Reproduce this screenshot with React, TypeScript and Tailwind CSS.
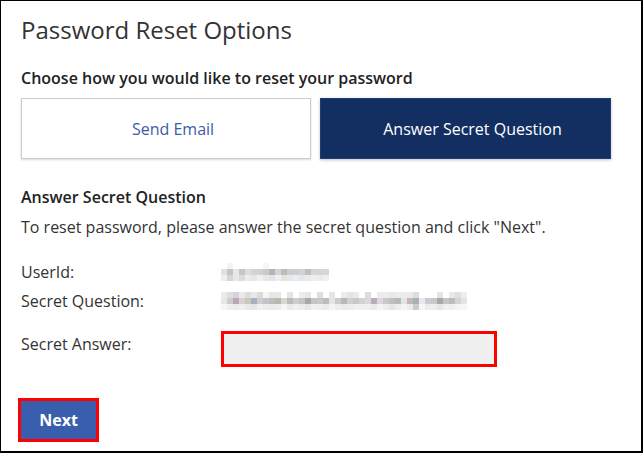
import React from 'react';

// Pixelated placeholder for the redacted values
const userIdPixels = [
  ['#ffffff', '#f4f4f4', '#ffffff', '#ffffff', '#ffffff', '#ffffff', '#ffffff', '#f6f6f6', '#ffffff', '#ffffff', '#ffffff', '#ffffff', '#ffffff', '#ffffff', '#ffffff', '#ffffff', '#ffffff', '#ffffff'],
  ['#e2e2e2', '#c4c4c4', '#e6e6e6', '#c8c3c7', '#dedcdf', '#d2d4d8', '#d3cfcc', '#cfcac8', '#b2b5bd', '#d4d4d4', '#c1bbb5', '#c9cdd4', '#d0ccc7', '#ccd4d6', '#bdbfc2', '#d8d4d0', '#cfd6da', '#d6d6d6'],
  ['#eeeeee', '#d6d6d9', '#e7e7e7', '#dcdcdc', '#ececec', '#e6e6e6', '#f0f0f0', '#e9e6e6', '#e2e4ea', '#efefef', '#e5e3de', '#e4e8ee', '#ececec', '#e0e8ec', '#ebebeb', '#eeeeee', '#e8ecf0', '#f0f0f0'],
];

const questionPixels = [
  ['#eeeaea', '#dedede', '#d9d3d9', '#eaeaea', '#dcdcdc', '#e8e8e8', '#dadada', '#f5f5f5', '#e6e6e6', '#e8e8e8', '#ffffff', '#e4e4e4', '#ffffff', '#ececec', '#e6e6e6', '#ffffff', '#dedede', '#ffffff', '#e6e6e6', '#ffffff', '#ececec', '#e4e4e4', '#eaeaea', '#ffffff', '#dcdcdc', '#ffffff', '#ececec', '#ececec', '#e8e8e8', '#ececec', '#ececec', '#eaeaea', '#dcdcdc', '#ffffff', '#ffffff', '#ffffff', '#e4e4e4', '#ffffff', '#e8e8e8', '#dfdfdf', '#ededed'],
  ['#e6e6e6', '#cccccc', '#b6a8b6', '#d4d2d2', '#ccc6c0', '#a8b0bc', '#d2cdd2', '#c4c4c8', '#bebebe', '#b8b8b0', '#d8d8d0', '#bcbcbc', '#cccccc', '#c4c4c4', '#a8a8a8', '#c4c4c4', '#c8c8c8', '#bcbcbc', '#e4e4e4', '#cccccc', '#b8b8b8', '#d0d0d0', '#c8c8cc', '#d8d0cc', '#d8d8e4', '#b8acb8', '#dcd8dc', '#c8c8c8', '#bcc0c4', '#b8b8b8', '#e4e4e4', '#c4b8b8', '#a8b0bc', '#eee8e4', '#c8ccd4', '#c8c8c8', '#a8a8a8', '#c8c4c4', '#bcbcbc', '#d4d4d4', '#e4e4e4'],
  ['#f6f6f6', '#eeeeee', '#ececec', '#f0f0f0', '#eaeaea', '#e6e6ea', '#f0f0f0', '#ececec', '#eaeaea', '#ececec', '#f6f6f6', '#eaeaea', '#f0f0f0', '#ececec', '#e6e6e6', '#f0f0f0', '#eeeeee', '#eaeaea', '#f4f4f4', '#eeeeee', '#eaeaea', '#ececec', '#f0f0f0', '#f4eeec', '#eeeef4', '#eaeaea', '#f4f4f4', '#eeeeee', '#e4e6e8', '#eeeeee', '#f4f4f4', '#ececec', '#cccccc', '#f6f6f6', '#eaecef', '#eeeeee', '#e6e6e6', '#f0f0f0', '#eeeeee', '#f4f4f4', '#f6f6f6'],
];

const PixelBlur = ({ rows, size }: { rows: string[][]; size: number }) => (
  <div className="flex flex-col">
    {rows.map((row, i) => (
      <div key={i} className="flex">
        {row.map((c, j) => (
          <div key={j} style={{ backgroundColor: c, width: size, height: size }} />
        ))}
      </div>
    ))}
  </div>
);

const App = () => {
  return (
    <div
      className="w-[643px] h-[453px] bg-white border-l border-t border-r-2 border-b-2 border-black px-5 text-[#333333]"
      style={{ fontFamily: '"Open Sans", "Liberation Sans", sans-serif' }}
    >
      {/* Título */}
      <h1 className="pt-[13px] text-[24px] leading-[32px] font-normal text-[#333333]">
        Password Reset Options
      </h1>

      <p className="mt-[22px] text-[16px] leading-[20px] font-semibold text-[#222222]">
        Choose how you would like to reset your password
      </p>

      {/* Opciones */}
      <div className="mt-[10px] flex gap-[9px]">
        <button className="w-[290px] h-[61px] pl-[14px] bg-white border border-[#cccccc] shadow-[0_1px_2px_rgba(0,0,0,0.15)] text-[16px] text-[#3a5cab]">
          Send Email
        </button>
        <button className="w-[291px] h-[61px] pl-[14px] bg-[#132f61] border border-[#1c3d75] shadow-[0_1px_3px_rgba(0,0,0,0.25)] text-[16px] text-white">
          Answer Secret Question
        </button>
      </div>

      {/* Pregunta secreta */}
      <h2 className="mt-[28px] text-[16px] leading-[20px] font-semibold text-[#222222]">
        Answer Secret Question
      </h2>
      <p className="mt-[10px] text-[16px] leading-[20px] text-[#333333]">
        To reset password, please answer the secret question and click "Next".
      </p>

      <div className="mt-[24px] flex items-center h-[22px]">
        <span className="w-[200px] text-[16px] leading-[20px]">UserId:</span>
        <PixelBlur rows={userIdPixels} size={6} />
      </div>
      <div className="mt-[7px] flex items-center h-[22px]">
        <span className="w-[200px] text-[16px] leading-[20px]">Secret Question:</span>
        <PixelBlur rows={questionPixels} size={6} />
      </div>

      <div className="mt-[19px] flex items-center">
        <span className="w-[200px] text-[16px] leading-[20px] -mt-[10px]">Secret Answer:</span>
        <input
          type="text"
          className="w-[276px] h-[36px] bg-[#f0f0f0] border-[3px] border-[#ff0000] outline-none"
        />
      </div>

      <div className="mt-[31px] -ml-[3px]">
        <button className="w-[81px] h-[44px] bg-[#385ead] border-[3px] border-[#ff0000] text-white text-[16px] font-bold">
          Next
        </button>
      </div>
    </div>
  );
};

export default App;
